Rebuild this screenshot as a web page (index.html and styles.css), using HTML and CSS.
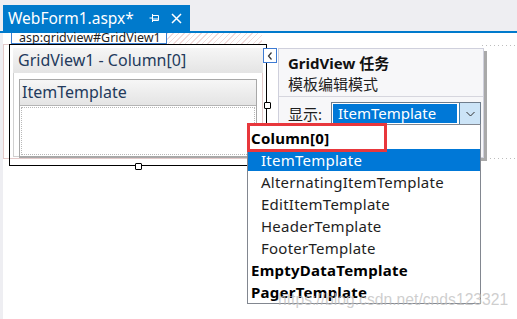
FILE: index.html
```html
<!DOCTYPE html>
<html lang="zh-CN">
<head>
    <meta charset="UTF-8">
    <title>WebForm1.aspx - Design</title>
    <link rel="stylesheet" href="styles.css">
</head>
<body>
    <!-- Document tab -->
    <div class="tabs">
        <div class="tab">
            <span class="tab-title">WebForm1.aspx*</span>
            <svg class="pin" width="11" height="10" viewBox="0 0 11 10">
                <path d="M0.5 5h3 M3.5 1v8 M3.5 2.5h6v5h-6 M3.5 6h6" fill="none" stroke="#fff" stroke-width="1"/>
            </svg>
            <svg class="close" width="11" height="11" viewBox="0 0 11 11">
                <path d="M1 1L10 10M10 1L1 10" stroke="#fff" stroke-width="1.5"/>
            </svg>
        </div>
    </div>
    <div class="docline"></div>

    <!-- Design surface -->
    <div class="surface">
        <div class="tagrow">
            <div class="tag">asp:gridview#GridView1</div>
            <div class="hatch"></div>
        </div>

        <div class="form">
            <div class="grid">
                <div class="frame">
                    <div class="frame-head">GridView1 - Column[0]</div>
                    <div class="template">
                        <div class="template-head">ItemTemplate</div>
                        <div class="template-body"></div>
                    </div>
                </div>
                <span class="handle handle-right"></span>
                <span class="handle handle-bottom"></span>
            </div>
        </div>

        <!-- Smart tag -->
        <div class="smart-btn">
            <svg width="6" height="8" viewBox="0 0 6 8"><path d="M4.5 0.5L1.5 4l3 3.5" fill="none" stroke="#333" stroke-width="1.2"/></svg>
        </div>
        <div class="tasks">
            <div class="tasks-title">GridView 任务</div>
            <div class="tasks-sub">模板编辑模式</div>
            <div class="tasks-sep"></div>
            <div class="tasks-row">
                <span class="tasks-label">显示:</span>
                <div class="combo">
                    <span class="combo-value">ItemTemplate</span>
                    <span class="combo-btn">
                        <svg width="9" height="6" viewBox="0 0 9 6"><path d="M0.5 1l4 4 4-4" fill="none" stroke="#333" stroke-width="1"/></svg>
                    </span>
                </div>
            </div>
        </div>

        <!-- Drop down list -->
        <div class="list">
            <div class="item bold">Column[0]</div>
            <div class="item selected">ItemTemplate</div>
            <div class="item">AlternatingItemTemplate</div>
            <div class="item">EditItemTemplate</div>
            <div class="item">HeaderTemplate</div>
            <div class="item">FooterTemplate</div>
            <div class="item bold">EmptyDataTemplate</div>
            <div class="item bold">PagerTemplate</div>
            <div class="mark"></div>
        </div>
    </div>

    <div class="watermark">https://blog.csdn.net/cnds123321</div>
</body>
</html>
```

FILE: styles.css
```css
body {
    margin: 0;
    width: 517px;
    height: 319px;
    overflow: hidden;
    background-color: #eeeef2;
    font-family: "Noto Sans", "Noto Sans CJK SC", sans-serif;
    font-size: 15px;
    color: #1e1e1e;
    position: relative;
}

.tabs {
    display: flex;
    height: 26px;
    padding: 5px 0 0 3px;
}

.tab {
    display: flex;
    align-items: center;
    width: 187px;
    height: 26px;
    padding-left: 5px;
    box-sizing: border-box;
    background-color: #007acc;
    color: white;
}

.tab-title {
    flex: 1;
    font-size: 15.5px;
}

.pin {
    margin-right: 11px;
}

.close {
    margin-right: 8px;
}

.docline {
    height: 2px;
    background-color: #007acc;
}

.surface {
    position: relative;
    height: 286px;
    margin-left: 3px;
    background-color: white;
}

.tagrow {
    display: flex;
    height: 11px;
    margin-left: 8px;
}

.tag {
    width: 156px;
    height: 11px;
    padding-left: 7px;
    box-sizing: border-box;
    border: 1px solid #3c7fd1;
    border-top: none;
    font-size: 12.5px;
    line-height: 9px;
    color: #1e1e1e;
}

.hatch {
    width: 95px;
    background: repeating-linear-gradient(135deg, #f1dcdc 0 1px, transparent 1px 4px);
}

.form {
    position: relative;
    height: 115px;
    margin-top: 3px;
    border-left: 1px solid #e4c9c9;
    background:
        linear-gradient(#e4c9c9, #e4c9c9) 0 0 / 258px 1px no-repeat,
        linear-gradient(#e4c9c9, #e4c9c9) 0 100% / 258px 1px no-repeat,
        repeating-linear-gradient(90deg, #bdbdbd 0 1px, transparent 1px 4px) 478px 1px / 100% 1px no-repeat,
        repeating-linear-gradient(90deg, #bdbdbd 0 1px, transparent 1px 4px) 478px 100% / 100% 1px no-repeat;
}

.grid {
    position: relative;
    width: 258px;
    height: 122px;
    margin: -3px 0 0 5px;
    padding: 3px 2px 0 3px;
    box-sizing: border-box;
    border: 1px solid #000;
}

.frame {
    width: 250px;
    height: 109px;
    box-sizing: border-box;
    border: 1px solid #d0d0d0;
    border-right-color: #e2caca;
    border-top: none;
}

.frame-head {
    height: 25px;
    margin: 0 -1px;
    padding-left: 5px;
    background: linear-gradient(#f6f6f6, #e4e4e4);
    font-size: 16px;
    line-height: 25px;
    color: #233a5c;
}

.template {
    margin: 6px 5px 0 5px;
    border: 1px solid #a8a8a8;
    border-bottom-width: 2px;
}

.template-head {
    height: 25px;
    padding-left: 2px;
    background: linear-gradient(#f6f6f6, #e4e4e4);
    border-bottom: 1px solid #b4b4b4;
    font-size: 16px;
    line-height: 25px;
    color: #233a5c;
}

.template-body {
    height: 46px;
    margin: 1px;
    border: 1px dotted #b8b8b8;
}

.handle {
    position: absolute;
    width: 5px;
    height: 5px;
    background: white;
    border: 1px solid #000;
    border-radius: 1px;
}

.handle-right {
    right: -5px;
    top: 57px;
}

.handle-bottom {
    left: 125px;
    bottom: -5px;
}

.smart-btn {
    position: absolute;
    left: 260px;
    top: 15px;
    width: 12px;
    height: 13px;
    display: flex;
    align-items: center;
    justify-content: center;
    background: white;
    border: 1px solid #3e7bd3;
}

.tasks {
    position: absolute;
    left: 275px;
    top: 15px;
    width: 206px;
    height: 110px;
    box-sizing: border-box;
    padding-top: 3px;
    background-color: #f7f7f9;
    border: 1px solid #cfd0dc;
    box-shadow: 3px 3px 0 #a9a9a9;
}

.tasks-title {
    padding-left: 9px;
    font-weight: bold;
    line-height: 22px;
    color: #111;
}

.tasks-sub {
    padding-left: 9px;
    line-height: 21px;
}

.tasks-sep {
    margin-top: 1px;
    border-top: 1px solid #d6d6de;
}

.tasks-row {
    display: flex;
    align-items: center;
    margin-top: 5px;
    padding-left: 9px;
}

.tasks-label {
    width: 43px;
}

.combo {
    display: flex;
    width: 150px;
    height: 23px;
    box-sizing: border-box;
    border: 1px solid #6f7d8c;
    background: white;
}

.combo-value {
    flex: 1;
    margin: 1px 2px 1px 1px;
    padding-left: 5px;
    background-color: #0078d7;
    color: white;
    line-height: 19px;
}

.combo-btn {
    width: 20px;
    display: flex;
    align-items: center;
    justify-content: center;
    background-color: #cce4f7;
    border-left: 1px solid #3c7fb1;
}

.list {
    position: absolute;
    left: 244px;
    top: 91px;
    width: 234px;
    height: 180px;
    box-sizing: border-box;
    padding-top: 2px;
    background: white;
    border: 1px solid #828790;
}

.item {
    height: 22px;
    padding-left: 13px;
    letter-spacing: 0.25px;
    line-height: 22px;
}

.item.bold {
    padding-left: 3px;
    font-weight: bold;
    color: #000;
}

.item.selected {
    background-color: #0078d7;
    color: white;
}

.mark {
    position: absolute;
    left: -1px;
    top: -2px;
    width: 140px;
    height: 29px;
    box-sizing: border-box;
    border: 3px solid #e8373c;
}

.watermark {
    position: absolute;
    left: 278px;
    top: 292px;
    font-family: "Liberation Sans", Arial, sans-serif;
    font-size: 15.7px;
    line-height: 16px;
    color: rgba(190, 190, 190, 0.75);
}
```
